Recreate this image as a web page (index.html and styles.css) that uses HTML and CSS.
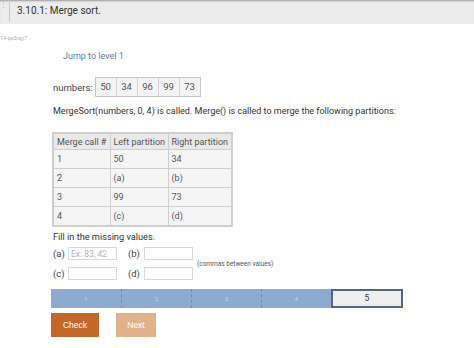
FILE: index.html
```html
<!DOCTYPE html>
<html>
<head>
<meta charset="utf-8">
<link rel="stylesheet" href="styles.css">
</head>
<body>
<div class="topbar">
  <span class="dots">⋮</span>
  <div class="title">3.10.1: Merge sort.</div>
</div>
<div class="ident">14 qx3rqy7</div>
<div class="content">
  <div class="jump">Jump to level 1</div>
  <div class="numbers">
    <span class="label">numbers:</span>
    <div class="arr">
      <span>50</span><span>34</span><span>96</span><span>99</span><span>73</span>
    </div>
  </div>
  <p class="desc">MergeSort(numbers, 0, 4) is called. Merge() is called to merge the following partitions:</p>
  <table class="calls">
    <colgroup><col class="c1"><col class="c2"><col class="c3"></colgroup>
    <thead>
      <tr><th>Merge call #</th><th>Left partition</th><th>Right partition</th></tr>
    </thead>
    <tbody>
      <tr><td>1</td><td>50</td><td>34</td></tr>
      <tr><td>2</td><td>(a)</td><td>(b)</td></tr>
      <tr><td>3</td><td>99</td><td>73</td></tr>
      <tr><td>4</td><td>(c)</td><td>(d)</td></tr>
    </tbody>
  </table>
  <div class="fill">Fill in the missing values.</div>
  <div class="answers">
    <div class="grid">
      <span class="lbl">(a)</span><input class="inp" placeholder="Ex: 83, 42">
      <span class="lbl lb2">(b)</span><input class="inp">
      <span class="lbl">(c)</span><input class="inp">
      <span class="lbl lb2">(d)</span><input class="inp">
    </div>
    <span class="hint">(commas between values)</span>
  </div>
  <div class="levels">
    <div class="lvl">1</div>
    <div class="lvl">2</div>
    <div class="lvl">3</div>
    <div class="lvl">4</div>
    <div class="lvl cur">5</div>
  </div>
  <div class="buttons">
    <button class="btn check">Check</button>
    <button class="btn next">Next</button>
  </div>
</div>
</body>
</html>
```
FILE: styles.css
```css
html, body {
  margin: 0;
  padding: 0;
  background: #fff;
  font-family: Roboto, "Liberation Sans", sans-serif;
  color: #333;
}
.topbar {
  height: 24px;
  background: #ececec;
  box-shadow: inset 0 2px 2px -1px rgba(0,0,0,0.35);
  display: flex;
  align-items: stretch;
}
.dots {
  width: 9px;
  font-size: 7px;
  color: #aaa;
  line-height: 8px;
  padding-top: 1px;
}
.title {
  border-left: 1px solid #c8c8c8;
  margin-bottom: 2px;
  padding-left: 7px;
  font-size: 10px;
  line-height: 22px;
  color: #333;
}
.ident {
  font-size: 5.5px;
  color: #aaa;
  margin-top: 11px;
  line-height: 6px;
}
.content {
  padding-left: 52px;
}
.jump {
  margin-top: 9px;
  margin-left: 11px;
  font-size: 9px;
  line-height: 12px;
  color: #5a7ca8;
}
.numbers {
  margin-top: 15px;
  display: flex;
  align-items: center;
  gap: 2px;
}
.label {
  font-size: 9.5px;
  color: #444;
  margin-left: 1px;
}
.arr {
  display: flex;
  border: 1px solid #c6c6c6;
  background: #f4f4f4;
  height: 18px;
}
.arr span {
  width: 20px;
  font-size: 9.5px;
  line-height: 18px;
  text-align: center;
  color: #555;
  border-left: 1px solid #d4d4d4;
}
.arr span:first-child {
  border-left: none;
}
.desc {
  margin: 8px 0 0 1px;
  font-size: 9px;
  line-height: 12px;
  color: #333;
}
.calls {
  margin-top: 15px;
  border-collapse: collapse;
  table-layout: fixed;
  width: 179px;
  border: 2px solid #cfcfcf;
  font-size: 9px;
  color: #555;
}
.c1 { width: 57px; }
.c2 { width: 58px; }
.c3 { width: 64px; }
.calls th, .calls td {
  border: 1px solid #cfcfcf;
  text-align: left;
  font-weight: normal;
  padding: 0 2px 0 3px;
  white-space: nowrap;
  overflow: hidden;
}
.calls th {
  background: #e9e9e9;
  height: 15px;
  line-height: 14px;
}
.calls td {
  background: #f5f5f5;
  height: 18px;
}
.fill {
  margin-top: 4px;
  margin-left: 1px;
  font-size: 9.2px;
  line-height: 12px;
  color: #333;
}
.answers {
  margin-top: 4px;
  display: flex;
  align-items: center;
}
.grid {
  display: grid;
  grid-template-columns: 16px 49px 27px 49px;
  row-gap: 7px;
  align-items: center;
}
.lbl {
  font-size: 9.5px;
  color: #444;
  margin-left: 1px;
}
.lb2 {
  margin-left: 11px;
}
.inp {
  width: 49px;
  height: 13px;
  box-sizing: border-box;
  border: 1px solid #d8d8d8;
  background: #fff;
  padding: 0 2px;
  margin: 0;
  font-family: Roboto, "Liberation Sans", sans-serif;
  font-size: 8.5px;
  color: #444;
  outline: none;
}
.inp::placeholder {
  color: #b5b5b5;
}
.hint {
  margin-left: 4px;
  margin-top: 1px;
  font-size: 6.5px;
  color: #555;
}
.levels {
  margin-top: 9px;
  width: 352px;
  height: 19px;
  display: flex;
  margin-left: -1px;
}
.lvl {
  flex: 0 0 70px;
  box-sizing: border-box;
  background: #8daad1;
  border-left: 1px dashed #6d8dba;
  color: #c9d8ec;
  font-size: 6px;
  line-height: 19px;
  text-align: center;
}
.lvl:first-child {
  border-left: none;
}
.lvl.cur {
  flex: 1;
  background: #efefef;
  border: 2px solid #566581;
  color: #333;
  font-size: 8.5px;
  line-height: 15px;
}
.buttons {
  margin-top: 5px;
  margin-left: -1px;
  display: flex;
  gap: 17px;
}
.btn {
  border: none;
  height: 24px;
  font-family: "Liberation Sans", Arial, sans-serif;
  font-size: 8.5px;
  color: #fff;
  padding: 0;
}
.check {
  width: 48px;
  background: #c4682a;
}
.next {
  width: 40px;
  background: #e1b18e;
}
```
